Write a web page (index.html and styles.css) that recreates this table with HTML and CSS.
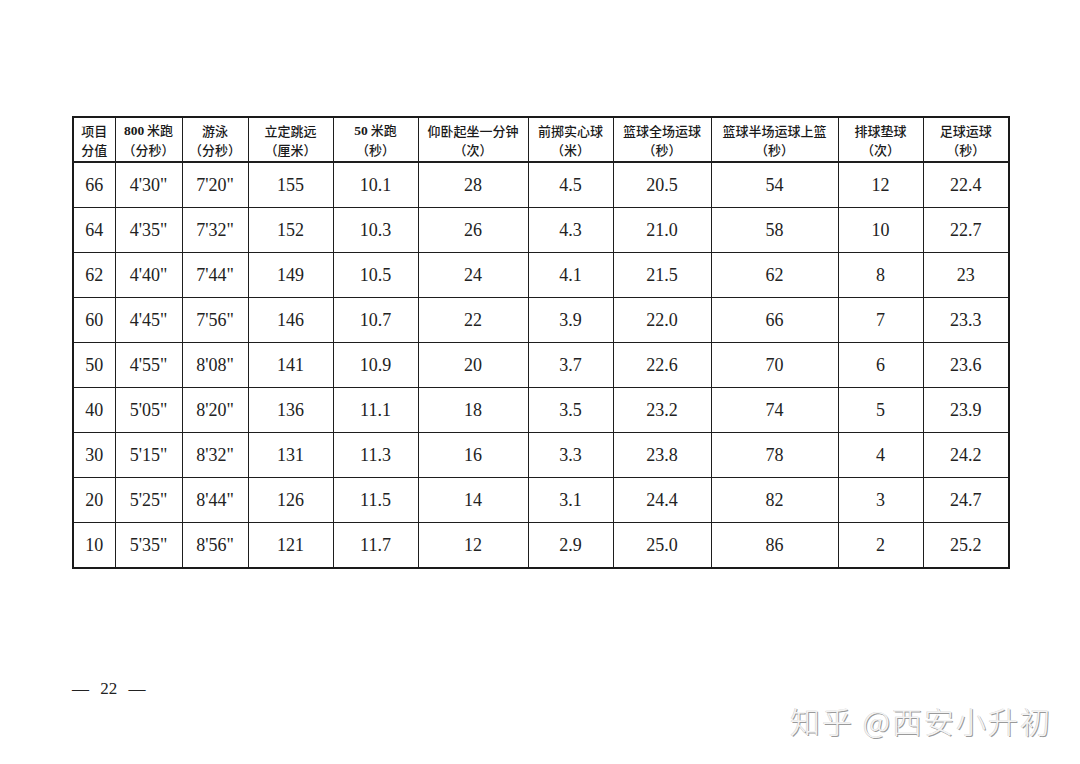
FILE: index.html
```html
<!DOCTYPE html>
<html lang="zh-CN">
<head>
<meta charset="utf-8">
<link rel="stylesheet" href="styles.css">
</head>
<body>
<div class="page">
  <table class="score">
    <colgroup>
      <col style="width:42px"><col style="width:67px"><col style="width:66px"><col style="width:85px">
      <col style="width:85px"><col style="width:110px"><col style="width:85px"><col style="width:98px">
      <col style="width:127px"><col style="width:85px"><col style="width:86px">
    </colgroup>
    <thead>
      <tr>
        <th>项目<br>分值</th>
        <th><b class="num">800</b> 米跑<br>（分秒）</th>
        <th>游泳<br>（分秒）</th>
        <th>立定跳远<br>（厘米）</th>
        <th><b class="num">50</b> 米跑<br>（秒）</th>
        <th>仰卧起坐一分钟<br>（次）</th>
        <th>前掷实心球<br>（米）</th>
        <th>篮球全场运球<br>（秒）</th>
        <th>篮球半场运球上篮<br>（秒）</th>
        <th>排球垫球<br>（次）</th>
        <th>足球运球<br>（秒）</th>
      </tr>
    </thead>
    <tbody>
      <tr><td>66</td><td>4'30"</td><td>7'20"</td><td>155</td><td>10.1</td><td>28</td><td>4.5</td><td>20.5</td><td>54</td><td>12</td><td>22.4</td></tr>
      <tr><td>64</td><td>4'35"</td><td>7'32"</td><td>152</td><td>10.3</td><td>26</td><td>4.3</td><td>21.0</td><td>58</td><td>10</td><td>22.7</td></tr>
      <tr><td>62</td><td>4'40"</td><td>7'44"</td><td>149</td><td>10.5</td><td>24</td><td>4.1</td><td>21.5</td><td>62</td><td>8</td><td>23</td></tr>
      <tr><td>60</td><td>4'45"</td><td>7'56"</td><td>146</td><td>10.7</td><td>22</td><td>3.9</td><td>22.0</td><td>66</td><td>7</td><td>23.3</td></tr>
      <tr><td>50</td><td>4'55"</td><td>8'08"</td><td>141</td><td>10.9</td><td>20</td><td>3.7</td><td>22.6</td><td>70</td><td>6</td><td>23.6</td></tr>
      <tr><td>40</td><td>5'05"</td><td>8'20"</td><td>136</td><td>11.1</td><td>18</td><td>3.5</td><td>23.2</td><td>74</td><td>5</td><td>23.9</td></tr>
      <tr><td>30</td><td>5'15"</td><td>8'32"</td><td>131</td><td>11.3</td><td>16</td><td>3.3</td><td>23.8</td><td>78</td><td>4</td><td>24.2</td></tr>
      <tr><td>20</td><td>5'25"</td><td>8'44"</td><td>126</td><td>11.5</td><td>14</td><td>3.1</td><td>24.4</td><td>82</td><td>3</td><td>24.7</td></tr>
      <tr><td>10</td><td>5'35"</td><td>8'56"</td><td>121</td><td>11.7</td><td>12</td><td>2.9</td><td>25.0</td><td>86</td><td>2</td><td>25.2</td></tr>
    </tbody>
  </table>
  <div class="pageno">— 22 —</div>
</div>
<div class="watermark">知乎 @西安小升初</div>
</body>
</html>
```

FILE: styles.css
```css
html, body {
  margin: 0;
  padding: 0;
  background: #ffffff;
}
body {
  width: 1080px;
  height: 764px;
  position: relative;
  overflow: hidden;
  font-family: "Liberation Serif", "Noto Sans CJK SC", serif;
  color: #1c1c1c;
}
.page {
  padding: 116px 0 0 72px;
}
.score {
  border-collapse: collapse;
  table-layout: fixed;
  width: 936px;
  border: 2px solid #1a1a1a;
}
.score th, .score td {
  border: 1.5px solid #1e1e1e;
  text-align: center;
  vertical-align: middle;
  padding: 0;
}
.score th {
  height: 43px;
  font-family: "Noto Sans CJK SC", sans-serif;
  font-weight: 500;
  font-size: 13px;
  line-height: 19px;
  color: #1a1a1a;
  border-bottom-width: 2px;
}
.score th .num {
  font-family: "Liberation Serif", serif;
  font-weight: bold;
  font-size: 13.5px;
}
.score td {
  height: 44px;
  font-family: "Liberation Serif", serif;
  font-size: 18px;
  color: #222;
}
.pageno {
  margin-top: 110px;
  font-family: "Liberation Serif", serif;
  font-size: 17px;
  color: #222;
  word-spacing: 7px;
}
.watermark {
  position: absolute;
  left: 790px;
  top: 698px;
  font-family: "Noto Sans CJK SC", sans-serif;
  font-size: 30px;
  font-weight: 300;
  color: #f4f4f4;
  letter-spacing: 2px;
  text-shadow: 1px 1px 0 #9a9a9a, -0.5px -0.5px 0 #d0d0d0;
}
```
